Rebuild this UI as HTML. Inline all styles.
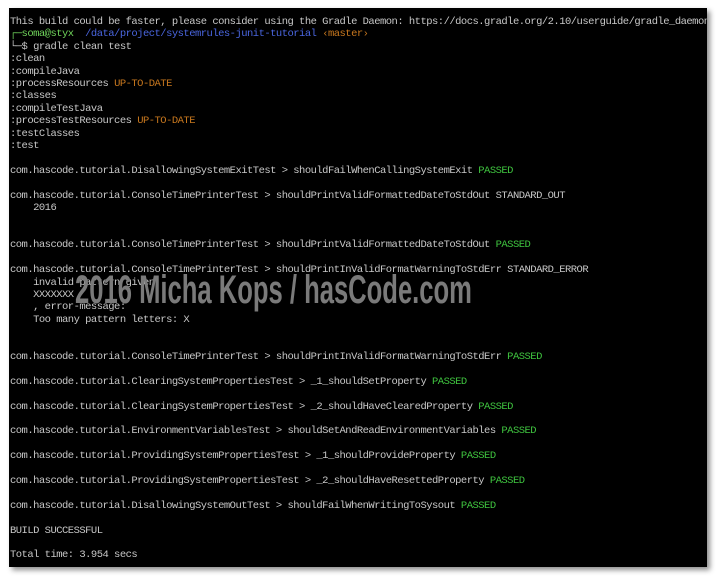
<!DOCTYPE html>
<html><head><meta charset="utf-8"><style>
html,body{margin:0;padding:0;background:#fff;width:720px;height:580px;overflow:hidden}
#t{position:absolute;left:9px;top:8px;width:698px;height:559px;background:#000;overflow:hidden;box-shadow:3px 3px 5px rgba(0,0,0,.45)}
pre{margin:0;position:absolute;left:1px;top:8px;font-family:"Liberation Mono","DejaVu Sans Mono",monospace;font-size:10.5px;letter-spacing:-0.52px;line-height:12.4px;color:#c8c8c8;white-space:pre}
.g{color:#3fc43f}.o{color:#c9781e}.p{color:#6fd35a}.b{color:#4a66e0}
#w{position:absolute;font-family:"Liberation Sans",sans-serif;font-weight:bold;font-size:40px;color:#7a7a7a;white-space:nowrap;transform:scaleX(0.64);transform-origin:0 0;line-height:44px}
</style></head><body>
<div id="t"><pre>This build could be faster, please consider using the Gradle Daemon: https://docs.gradle.org/2.10/userguide/gradle_daemon.html
<span class="p">┌─soma@styx</span>  <span class="b">/data/project/systemrules-junit-tutorial</span> <span class="o">‹master›</span>
└─$ gradle clean test
:clean
:compileJava
:processResources <span class="o">UP-TO-DATE</span>
:classes
:compileTestJava
:processTestResources <span class="o">UP-TO-DATE</span>
:testClasses
:test

com.hascode.tutorial.DisallowingSystemExitTest &gt; shouldFailWhenCallingSystemExit <span class="g">PASSED</span>

com.hascode.tutorial.ConsoleTimePrinterTest &gt; shouldPrintValidFormattedDateToStdOut STANDARD_OUT
    2016


com.hascode.tutorial.ConsoleTimePrinterTest &gt; shouldPrintValidFormattedDateToStdOut <span class="g">PASSED</span>

com.hascode.tutorial.ConsoleTimePrinterTest &gt; shouldPrintInValidFormatWarningToStdErr STANDARD_ERROR
    invalid pattern given:
    XXXXXXX
    , error-message:
    Too many pattern letters: X


com.hascode.tutorial.ConsoleTimePrinterTest &gt; shouldPrintInValidFormatWarningToStdErr <span class="g">PASSED</span>

com.hascode.tutorial.ClearingSystemPropertiesTest &gt; _1_shouldSetProperty <span class="g">PASSED</span>

com.hascode.tutorial.ClearingSystemPropertiesTest &gt; _2_shouldHaveClearedProperty <span class="g">PASSED</span>

com.hascode.tutorial.EnvironmentVariablesTest &gt; shouldSetAndReadEnvironmentVariables <span class="g">PASSED</span>

com.hascode.tutorial.ProvidingSystemPropertiesTest &gt; _1_shouldProvideProperty <span class="g">PASSED</span>

com.hascode.tutorial.ProvidingSystemPropertiesTest &gt; _2_shouldHaveResettedProperty <span class="g">PASSED</span>

com.hascode.tutorial.DisallowingSystemOutTest &gt; shouldFailWhenWritingToSysout <span class="g">PASSED</span>

BUILD SUCCESSFUL

Total time: 3.954 secs</pre>
<div id="w" style="left:66px;top:260px">2016 Micha Kops / hasCode.com</div>
</div>
</body></html>
